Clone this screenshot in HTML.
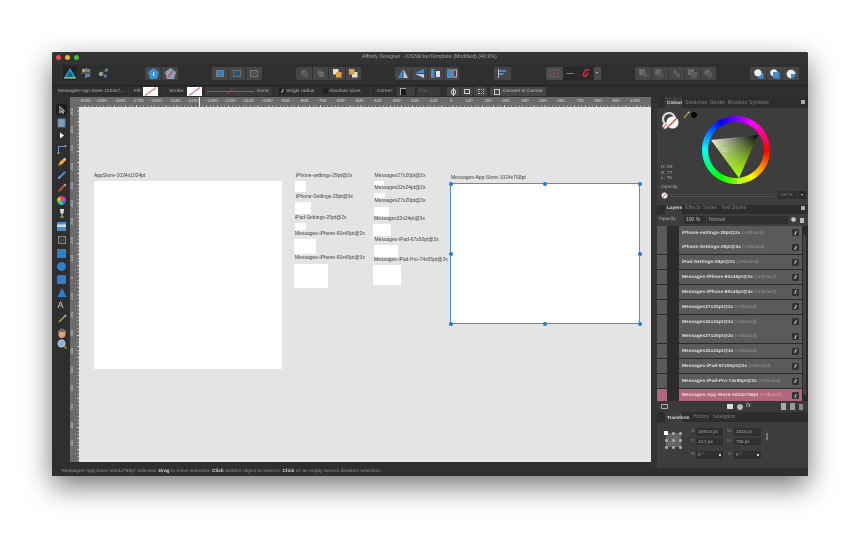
<!DOCTYPE html>
<html>
<head>
<meta charset="utf-8">
<style>
html,body{margin:0;padding:0;background:#fff;width:860px;height:546px;overflow:hidden}
body{font-family:"Liberation Sans",sans-serif;position:relative}
div,span,svg{position:absolute;box-sizing:border-box}
#win{left:52px;top:52px;width:756px;height:424px;background:#2f2f2f;box-shadow:0 10px 28px rgba(0,0,0,.55);border-radius:2px 2px 0 0}
#stage{left:0;top:0;width:860px;height:546px;filter:blur(.35px)}
.t{font-size:4.8px;color:#b4b4b4;white-space:nowrap;line-height:7px;letter-spacing:.05px}
.g{background:#464646;border-radius:1.5px;top:67px;height:12.5px}
.ab{background:#fff}
.l{font-size:5px;color:#3c3c3c;white-space:nowrap;line-height:6px;letter-spacing:0}
.rl{font-size:4.5px;color:#d4d4d4;top:97.5px;line-height:5px;white-space:nowrap;transform:translateX(-50%)}
.vl{font-size:4px;color:#d4d4d4;left:70px;line-height:4px;white-space:nowrap;transform-origin:0 0;transform:rotate(-90deg) translateX(-50%)}
.row{left:657px;width:145px;height:14px;background:#5a5a5a}
.sw{left:667px;width:12px;height:14px;background:#2c2c2c}
.rt{left:682px;font-size:4.7px;font-weight:bold;color:#e4e4e4;letter-spacing:.1px;line-height:14px;white-space:nowrap}
.rt i{font-style:normal;font-weight:normal;color:#999}
.ck{left:792px;width:7px;height:7px;background:#333;border-radius:1px;color:#eee}
.ck:after{content:"";position:absolute;left:3.2px;top:1.5px;width:1px;height:4px;background:#ddd;transform:rotate(25deg)}
.h{width:4px;height:4px;background:#2a7ed3;border-radius:50%}
.tab{font-size:5px;color:#808080;line-height:11px;white-space:nowrap;letter-spacing:.1px}
.fld{background:#303030;border-radius:1px;height:7.5px;font-size:4.5px;color:#aaa;line-height:7.5px;padding-left:2px;white-space:nowrap}
.dot{width:3px;height:3px;background:#aaa;border-radius:50%}
</style>
</head>
<body>
<div id="win"></div>
<div id="stage">
<!-- status -->
<div style="left:52px;top:462px;width:756px;height:14px;background:#2f2f2f"></div>
<div class="t" style="left:61px;top:468px;color:#929292;font-size:4.8px;letter-spacing:.05px">'Messages-App-Store-1024x768pt' selected. <b style="color:#ddd">Drag</b> to move selection. <b style="color:#ddd">Click</b> another object to select it. <b style="color:#ddd">Click</b> on an empty area to deselect selection.</div>
<!-- title bar -->
<div style="left:52px;top:52px;width:756px;height:12px;background:#333;border-radius:2px 2px 0 0"></div>
<div style="left:56px;top:55px;width:5px;height:5px;border-radius:50%;background:#f0504a"></div>
<div style="left:65px;top:55px;width:5px;height:5px;border-radius:50%;background:#f5b52e"></div>
<div style="left:74px;top:55px;width:5px;height:5px;border-radius:50%;background:#3ec840"></div>
<div class="t" style="left:362px;top:54px;color:#a8a8a8;font-size:5.2px">Affinity Designer - iOSStickerTemplate (Modified) (40.9%)</div>
<!-- toolbar -->
<div style="left:63px;top:66px;width:14px;height:14px;background:#222;border-radius:1px"></div>
<svg style="left:64px;top:68px" width="12" height="11"><polygon points="6,0 12,10 0,10" fill="#1b9fd8"/><polygon points="6,3 9.5,9 2.5,9" fill="#0e5f85"/><rect x="0" y="9.5" width="12" height="1" fill="#d6e25a"/></svg>
<svg style="left:81px;top:68px" width="10" height="10"><rect x="4" y="0" width="2" height="10" fill="#777"/><rect x="0" y="4" width="10" height="2" fill="#555"/><rect x="1" y="1" width="3" height="3" fill="#c49a4a"/><rect x="6" y="6" width="3" height="3" fill="#4a8ac4"/><rect x="6" y="1" width="3" height="3" fill="#4aa36a"/></svg>
<svg style="left:98px;top:68px" width="11" height="10"><circle cx="3" cy="6" r="2.2" fill="#a0a0a0"/><circle cx="8.5" cy="2" r="1.6" fill="#4a9a7a"/><circle cx="7.5" cy="8" r="1.6" fill="#4a7ab0"/><path d="M3 6L8.5 2M3 6L7.5 8" stroke="#888" stroke-width=".6"/></svg>

<div class="g" style="left:145px;width:33px"></div>
<div style="left:161px;top:67px;width:1px;height:12.5px;background:#333"></div>
<svg style="left:148px;top:68px" width="11" height="11"><polygon points="5.5,0 11,4 9,11 2,11 0,4" fill="#3f8fd0"/><rect x="5" y="4" width="1.2" height="4" fill="#fff"/></svg>
<svg style="left:165px;top:68px" width="11" height="11"><polygon points="5.5,0 11,4 9,11 2,11 0,4" fill="#8aa3b8"/><path d="M3 9L8 3" stroke="#d33" stroke-width="1"/></svg>

<div class="g" style="left:212px;width:50px"></div>
<div style="left:228px;top:67px;width:1px;height:12.5px;background:#333"></div>
<div style="left:245px;top:67px;width:1px;height:12.5px;background:#333"></div>
<svg style="left:215px;top:69px" width="10" height="9"><rect x="1.5" y="1.5" width="7" height="6" fill="#2f7fc0" stroke="#999" stroke-width=".6"/></svg>
<svg style="left:232px;top:69px" width="10" height="9"><rect x="1.5" y="1.5" width="7" height="6" fill="#24577f" stroke="#888" stroke-width=".6"/></svg>
<svg style="left:249px;top:69px" width="10" height="9"><rect x="1.5" y="1.5" width="7" height="6" fill="none" stroke="#888" stroke-width=".7"/><path d="M1.5 1.5L8.5 7.5M8.5 1.5L1.5 7.5" stroke="#777" stroke-width=".5"/></svg>

<div class="g" style="left:296px;width:65px"></div>
<div style="left:312px;top:67px;width:1px;height:12.5px;background:#333"></div>
<div style="left:328px;top:67px;width:1px;height:12.5px;background:#333"></div>
<div style="left:345px;top:67px;width:1px;height:12.5px;background:#333"></div>
<svg style="left:300px;top:69px" width="9" height="9"><rect x="1" y="1" width="5" height="5" fill="#666"/><rect x="3" y="3" width="5" height="5" fill="#595959"/></svg>
<svg style="left:316px;top:69px" width="9" height="9"><rect x="1" y="1" width="5" height="5" fill="#5e5e5e"/><rect x="3" y="3" width="5" height="5" fill="#6a6a6a"/></svg>
<svg style="left:333px;top:69px" width="9" height="9"><rect x="0" y="0" width="5.5" height="5.5" fill="#ddd"/><rect x="3" y="3" width="5.5" height="5.5" fill="#e2a43a"/></svg>
<svg style="left:349px;top:69px" width="9" height="9"><rect x="3" y="3" width="5.5" height="5.5" fill="#ddd"/><rect x="0" y="0" width="5.5" height="5.5" fill="#e2a43a"/></svg>

<div class="g" style="left:395px;width:64px"></div>
<div style="left:411px;top:67px;width:1px;height:12.5px;background:#333"></div>
<div style="left:427px;top:67px;width:1px;height:12.5px;background:#333"></div>
<div style="left:443px;top:67px;width:1px;height:12.5px;background:#333"></div>
<svg style="left:398px;top:69px" width="10" height="9"><polygon points="4.5,0 4.5,9 0,9" fill="#3f8fd0"/><polygon points="5.5,0 5.5,9 10,9" fill="#bcd"/></svg>
<svg style="left:415px;top:69px" width="10" height="9"><polygon points="9,0 9,4 0,4" fill="#3f8fd0"/><polygon points="9,5 9,9 0,5" fill="#bcd"/></svg>
<svg style="left:431px;top:69px" width="10" height="9"><rect x="0" y="0" width="3.5" height="9" fill="#3f8fd0"/><rect x="5" y="2" width="4" height="6" fill="#dde"/></svg>
<svg style="left:447px;top:69px" width="10" height="9"><rect x="0" y="0" width="5" height="9" fill="#3f8fd0"/><rect x="6" y="1" width="3.5" height="7" fill="none" stroke="#dde" stroke-width=".7"/></svg>

<div class="g" style="left:494px;width:17px"></div>
<svg style="left:498px;top:69px" width="9" height="9"><rect x="0" y="0" width="1" height="9" fill="#bbb"/><rect x="1" y="1" width="7" height="2" fill="#3f8fd0"/><rect x="1" y="4" width="4.5" height="2" fill="#3f8fd0"/></svg>

<div class="g" style="left:546px;width:17px;background:#4c4c4c"></div>
<svg style="left:549px;top:69px" width="10" height="9"><rect x="1" y="1" width="8" height="7" fill="none" stroke="#777" stroke-width="1" stroke-dasharray="1 1"/><rect x="4" y="3.5" width="2" height="2" fill="#d33"/></svg>
<div class="g" style="left:563px;width:30px;background:#282828"></div>
<div style="left:566px;top:73px;width:8px;height:1px;background:#777"></div>
<svg style="left:582px;top:68.5px" width="9" height="10"><path d="M7.5 1.5A3.4 3.4 0 0 0 3 1.8L1.2 5.5A2 2 0 0 0 4 7L6 3.6" fill="none" stroke="#c9283a" stroke-width="1.8"/></svg>
<div class="g" style="left:594px;width:7px;background:#4c4c4c"></div>
<div style="left:596px;top:72px;border:1.5px solid transparent;border-top:2px solid #ccc"></div>

<div class="g" style="left:635px;width:81px"></div>
<div style="left:651px;top:67px;width:1px;height:12.5px;background:#383838"></div>
<div style="left:668px;top:67px;width:1px;height:12.5px;background:#383838"></div>
<div style="left:684px;top:67px;width:1px;height:12.5px;background:#383838"></div>
<div style="left:700px;top:67px;width:1px;height:12.5px;background:#383838"></div>
<svg style="left:639px;top:69px" width="9" height="9"><rect x="0" y="0" width="6" height="6" fill="#6c6c6c"/><circle cx="6" cy="6" r="2.5" fill="#5a5a5a"/></svg>
<svg style="left:655px;top:69px" width="9" height="9"><rect x="0" y="0" width="6" height="6" fill="#666"/><circle cx="6" cy="6" r="2.5" fill="#555"/></svg>
<svg style="left:672px;top:69px" width="9" height="9"><rect x="1" y="1" width="4" height="4" fill="#5c5c5c"/><rect x="4" y="4" width="4" height="4" fill="#5c5c5c"/></svg>
<svg style="left:688px;top:69px" width="9" height="9"><rect x="0" y="0" width="6" height="6" fill="#6a6a6a"/><rect x="3" y="3" width="6" height="6" fill="#5c5c5c"/></svg>
<svg style="left:704px;top:69px" width="9" height="9"><circle cx="3.5" cy="3.5" r="3" fill="#6a6a6a"/><circle cx="5.5" cy="5.5" r="3" fill="#5a5a5a"/></svg>

<div class="g" style="left:750px;width:49px"></div>
<div style="left:766px;top:67px;width:1px;height:12.5px;background:#383838"></div>
<div style="left:782px;top:67px;width:1px;height:12.5px;background:#383838"></div>
<svg style="left:754px;top:68.5px" width="10" height="10"><rect x="4" y="4" width="5.5" height="5.5" fill="#3f8fd0"/><circle cx="3.8" cy="3.8" r="3.6" fill="#eee"/></svg>
<svg style="left:770px;top:68.5px" width="10" height="10"><circle cx="3.8" cy="3.8" r="3.6" fill="#eee"/><rect x="3" y="3" width="6.5" height="6.5" fill="#3f8fd0"/></svg>
<svg style="left:786px;top:68.5px" width="10" height="10"><circle cx="5" cy="5" r="4.4" fill="#eee"/><path d="M5 5H9.4A4.4 4.4 0 0 1 5 9.4Z" fill="#3f8fd0"/></svg>

<!-- context bar -->
<div style="left:52px;top:85px;width:756px;height:.7px;background:#222"></div>
<div class="t" style="left:58px;top:87.5px;letter-spacing:-.02px">Messages-App-Store-1024x7...</div>
<div style="left:128px;top:87px;width:1px;height:9px;background:#3c3c3c"></div>
<div class="t" style="left:134px;top:87.5px">Fill:</div>
<svg style="left:143px;top:86.5px" width="15" height="9"><rect width="15" height="9" fill="#fff"/><path d="M2 8.5L13 .5" stroke="#e5484d" stroke-width=".8"/></svg>
<div style="left:163px;top:87px;width:1px;height:9px;background:#3c3c3c"></div>
<div class="t" style="left:169px;top:87.5px">Stroke:</div>
<svg style="left:187px;top:86.5px" width="15" height="9"><rect width="15" height="9" fill="#fff"/><path d="M2 8.5L13 .5" stroke="#e5484d" stroke-width=".8"/></svg>
<div style="left:205px;top:87px;width:67px;height:9px;background:#3a3a3a;border-radius:1px"></div>
<div style="left:207px;top:90.5px;width:47px;height:1px;background:#6a6a6a"></div>
<svg style="left:226px;top:88px" width="8" height="7"><path d="M1 6L7 1" stroke="#d33" stroke-width=".8"/></svg>
<div class="t" style="left:257px;top:87.5px">None</div>
<div style="left:276px;top:87px;width:1px;height:9px;background:#3c3c3c"></div>
<div style="left:279px;top:88px;width:6px;height:6px;background:#222;border-radius:1px"></div>
<div style="left:281.5px;top:89px;width:1px;height:4px;background:#ddd;transform:rotate(25deg)"></div>
<div class="t" style="left:286px;top:87.5px">Single radius</div>
<div style="left:322px;top:88px;width:6px;height:6px;background:#222;border-radius:1px"></div>
<div class="t" style="left:329px;top:87.5px">Absolute sizes</div>
<div style="left:370px;top:87px;width:1px;height:9px;background:#3c3c3c"></div>
<div class="t" style="left:377px;top:87.5px">Corner:</div>
<div style="left:397px;top:87px;width:18px;height:9px;background:#3e3e3e;border-radius:1px"></div>
<div style="left:400px;top:88px;width:6px;height:6.5px;background:#1a1a1a;border:.5px solid #aaa;border-right:none;border-bottom:none"></div>
<div style="left:417px;top:87px;width:23px;height:9px;background:#3a3a3a;border-radius:1px"></div>
<div class="t" style="left:419px;top:87.5px;color:#6e6e6e">0 %</div>
<div class="g" style="left:447px;top:87px;width:13px;height:9px"></div>
<div class="g" style="left:461px;top:87px;width:12px;height:9px"></div>
<div class="g" style="left:474px;top:87px;width:13px;height:9px"></div>
<div style="left:451px;top:88.5px;width:5px;height:6px;border-radius:50%;border:.8px solid #ddd"></div>
<div style="left:453px;top:87.5px;width:1px;height:8px;background:#ddd"></div>
<div style="left:464px;top:89px;width:6px;height:4.5px;border:.8px solid #ccc"></div>
<div style="left:478px;top:89px;width:6px;height:4.5px;border:.8px dotted #ccc"></div>
<div class="g" style="left:490px;top:87px;width:56px;height:9px"></div>
<div style="left:494px;top:88.5px;width:6px;height:6px;border:.8px solid #ccc"></div>
<div class="t" style="left:503px;top:87.5px;color:#c4c4c4">Convert to Curves</div>

<!-- rulers -->
<div style="left:70px;top:97px;width:581px;height:10px;background:#6b6b6b"></div>
<div style="left:70px;top:104.5px;width:581px;height:2.5px;background:repeating-linear-gradient(90deg,#d0d0d0 0,#d0d0d0 .6px,transparent .6px,transparent 3.68px)"></div>
<div style="left:70px;top:97px;width:9px;height:365px;background:#6b6b6b"></div>
<div style="left:76.5px;top:107px;width:2.5px;height:355px;background:repeating-linear-gradient(180deg,#d0d0d0 0,#d0d0d0 .6px,transparent .6px,transparent 3.68px)"></div>
<div style="left:199px;top:97px;width:.8px;height:10px;background:#eee"></div>
<div class="rl" style="left:85px">-2000</div><div class="rl" style="left:101px">-1900</div><div class="rl" style="left:120px">-1800</div>
<div class="rl" style="left:138px">-1700</div><div class="rl" style="left:156px">-1600</div><div class="rl" style="left:175px">-1500</div>
<div class="rl" style="left:193px">-1400</div><div class="rl" style="left:212px">-1300</div><div class="rl" style="left:230px">-1200</div>
<div class="rl" style="left:248px">-1100</div><div class="rl" style="left:267px">-1000</div><div class="rl" style="left:285px">-900</div>
<div class="rl" style="left:304px">-800</div><div class="rl" style="left:322px">-700</div><div class="rl" style="left:340px">-600</div>
<div class="rl" style="left:359px">-500</div><div class="rl" style="left:377px">-400</div><div class="rl" style="left:396px">-300</div>
<div class="rl" style="left:414px">-200</div><div class="rl" style="left:433px">-100</div><div class="rl" style="left:451px">0</div>
<div class="rl" style="left:469px">100</div><div class="rl" style="left:488px">200</div><div class="rl" style="left:506px">300</div>
<div class="rl" style="left:525px">400</div><div class="rl" style="left:543px">500</div><div class="rl" style="left:561px">600</div>
<div class="rl" style="left:580px">700</div><div class="rl" style="left:598px">800</div><div class="rl" style="left:616px">900</div>
<div class="rl" style="left:635px">1000</div>
<div class="vl" style="top:112px">-900</div><div class="vl" style="top:130px">-800</div><div class="vl" style="top:149px">-700</div>
<div class="vl" style="top:167px">-600</div><div class="vl" style="top:186px">-500</div><div class="vl" style="top:204px">-400</div>
<div class="vl" style="top:222px">-300</div><div class="vl" style="top:241px">-200</div><div class="vl" style="top:259px">-100</div>
<div class="vl" style="top:278px">0</div><div class="vl" style="top:296px">100</div><div class="vl" style="top:315px">200</div>
<div class="vl" style="top:333px">300</div><div class="vl" style="top:351px">400</div><div class="vl" style="top:370px">500</div>
<div class="vl" style="top:388px">600</div><div class="vl" style="top:407px">700</div><div class="vl" style="top:425px">800</div>
<div class="vl" style="top:443px">900</div>

<!-- canvas -->
<div style="left:79px;top:107px;width:572px;height:355px;background:#e4e4e4"></div>
<div class="ab" style="left:94px;top:181px;width:188px;height:188px"></div>
<div class="l" style="left:94px;top:173px">AppStore-1024x1024pt</div>
<div class="ab" style="left:295px;top:181px;width:11px;height:10.5px"></div>
<div class="l" style="left:296px;top:172.5px">iPhone-settings-29pt@2x</div>
<div class="ab" style="left:295px;top:202px;width:16px;height:12px"></div>
<div class="l" style="left:296px;top:194px">iPhone-Settings-29pt@3x</div>
<div class="ab" style="left:295px;top:223px;width:11px;height:7px"></div>
<div class="l" style="left:295px;top:215px">iPad-Settings-29pt@2x</div>
<div class="ab" style="left:294px;top:239px;width:22px;height:15px"></div>
<div class="l" style="left:295px;top:231px">Messages-iPhone-60x45pt@2x</div>
<div class="ab" style="left:294px;top:264px;width:34px;height:24px"></div>
<div class="l" style="left:295px;top:255px">Messages-iPhone-60x45pt@3x</div>
<div class="ab" style="left:374px;top:181px;width:10px;height:4.5px"></div>
<div class="l" style="left:374.5px;top:173px">Messages27x20pt@2x</div>
<div class="ab" style="left:374px;top:193px;width:11px;height:5px"></div>
<div class="l" style="left:374.5px;top:185px">Messages32x24pt@2x</div>
<div class="ab" style="left:374px;top:207px;width:15px;height:9px"></div>
<div class="l" style="left:374.5px;top:198px">Messages27x20pt@3x</div>
<div class="ab" style="left:373px;top:224px;width:18px;height:12px"></div>
<div class="l" style="left:374px;top:216px">Messages32x24pt@3x</div>
<div class="ab" style="left:374px;top:245px;width:24px;height:12px"></div>
<div class="l" style="left:374.5px;top:236.5px">Messages-iPad-67x50pt@2x</div>
<div class="ab" style="left:373px;top:265px;width:28px;height:20px"></div>
<div class="l" style="left:374px;top:256.5px">Messages-iPad-Pro-74x55pt@2x</div>
<div class="l" style="left:451px;top:175px">Messages-App-Store-1024x768pt</div>
<div class="ab" style="left:450px;top:183px;width:190px;height:141px;border:1px solid #4a90d9"></div>
<div class="h" style="left:448.5px;top:181.5px"></div><div class="h" style="left:543px;top:181.5px"></div><div class="h" style="left:638px;top:181.5px"></div>
<div class="h" style="left:448.5px;top:251.5px"></div><div class="h" style="left:638px;top:251.5px"></div>
<div class="h" style="left:448.5px;top:322px"></div><div class="h" style="left:543px;top:322px"></div><div class="h" style="left:638px;top:322px"></div>

<!-- tools -->
<div style="left:52px;top:97px;width:18px;height:365px;background:#2f2f2f"></div>
<div style="left:56px;top:104px;width:11px;height:11px;background:#1d1d1d;border-radius:1px"></div>
<svg style="left:59px;top:105.5px" width="6" height="8"><path d="M.8.5V7L2.4 5.4 3.6 7.6 4.6 7 3.5 4.9H5.4Z" fill="#555" stroke="#ddd" stroke-width=".6"/></svg>
<svg style="left:57px;top:118px" width="9" height="10"><rect x="1" y="1" width="7" height="8" fill="#8a9aa8" stroke="#3f8fd0" stroke-width=".8"/></svg>
<svg style="left:59px;top:132px" width="6" height="7"><path d="M1 .5V6.5L5 3.5Z" fill="#fff"/></svg>
<svg style="left:57px;top:144px" width="10" height="10"><path d="M1.5 9V2.5H8" fill="none" stroke="#6a94c0" stroke-width="1"/><circle cx="1.5" cy="9" r="1" fill="#aaa"/><circle cx="8.5" cy="2" r="1" fill="#aaa"/></svg>
<svg style="left:57px;top:157px" width="10" height="10"><path d="M1 9L3 4.5 7 1 9 3 5.5 7Z" fill="#e3a63e"/><path d="M7 1L9 3" stroke="#ddd"/></svg>
<svg style="left:57px;top:170px" width="10" height="10"><path d="M1 9L2 6.5 7.5 1 9 2.5 3.5 8Z" fill="#3f8fd0"/><path d="M1 9L2 6.5 3.5 8Z" fill="#e8c9a0"/></svg>
<svg style="left:57px;top:183px" width="10" height="10"><path d="M1 9L2 6.5 7.5 1 9 2.5 3.5 8Z" fill="#b55a3a"/><path d="M7.5 1L9 2.5" stroke="#ddd"/></svg>
<div style="left:57px;top:196px;width:9px;height:9px;border-radius:50%;background:conic-gradient(#e33,#e3c,#36d,#3cc,#3c3,#ec3,#e33)"></div>
<svg style="left:58px;top:208px" width="8" height="11"><path d="M2 1H6L5.5 5.5H2.5Z" fill="#ddd"/><rect x="3.5" y="5.5" width="1" height="3" fill="#bbb"/><rect x="2" y="8.5" width="4" height="1.2" fill="#999"/></svg>
<div style="left:57px;top:222px;width:9px;height:9px;background:linear-gradient(#3f8fd0 0,#3f8fd0 30%,#ddd 30%,#ddd 55%,#3f8fd0 55%)"></div>
<svg style="left:57px;top:235px" width="10" height="10"><rect x="1.5" y="1.5" width="7" height="7" fill="none" stroke="#999" stroke-width=".8"/><path d="M1.5 1.5L8.5 8.5M8.5 1.5L1.5 8.5" stroke="#888" stroke-width=".5"/></svg>
<div style="left:57px;top:249px;width:9px;height:9px;background:#2f80cc"></div>
<div style="left:57px;top:262px;width:9px;height:9px;background:#2f80cc;border-radius:50%"></div>
<div style="left:57px;top:275px;width:9px;height:9px;background:#2f80cc;border-radius:2px"></div>
<svg style="left:57px;top:288px" width="10" height="9"><polygon points="5,0 9.5,9 .5,9" fill="#2f80cc"/></svg>
<div class="t" style="left:57.5px;top:301px;font-size:9px;line-height:9px;color:#cfcfcf;letter-spacing:0">A</div>
<svg style="left:58px;top:314px" width="9" height="9"><path d="M1 8L6.5 2.5" stroke="#c9a54a" stroke-width="1.3"/><path d="M6.5 2.5L8 1" stroke="#ddd" stroke-width="1.3"/></svg>
<svg style="left:57px;top:327px" width="10" height="11"><path d="M2 6V3M4 5.5V1.5M6 5.5V2M8 6V3M2 5.5V8.5Q3 10.5 5 10.5T8 8V5.5Z" fill="#d9a27c" stroke="#d9a27c" stroke-width="1"/></svg>
<svg style="left:57px;top:339px" width="10" height="10"><circle cx="4.5" cy="4.5" r="3.6" fill="#7fb6e6" stroke="#ddd" stroke-width=".7"/><path d="M7 7L9.5 9.5" stroke="#c9a54a" stroke-width="1.2"/></svg>

<!-- right dock -->
<div style="left:651px;top:97px;width:157px;height:379px;background:#333"></div>
<div style="left:657px;top:97px;width:151px;height:11px;background:#2d2d2d"></div>
<div style="left:665px;top:97px;width:17px;height:11px;background:#3d3d3d"></div>
<div class="tab" style="left:667px;top:97.5px;color:#ddd;font-weight:bold;letter-spacing:0;font-size:4.8px">Colour</div>
<div class="tab" style="left:685px;top:97.5px">Swatches</div>
<div class="tab" style="left:710px;top:97.5px">Stroke</div>
<div class="tab" style="left:728px;top:97.5px">Brushes</div>
<div class="tab" style="left:749px;top:97.5px">Symbols</div>
<div style="left:801px;top:100px;width:4px;height:4px;background:#aaa"></div>
<!-- colour panel -->
<div style="left:657px;top:108px;width:151px;height:97px;background:#3d3d3d"></div>
<div style="left:662px;top:112px;width:14px;height:14px;border-radius:50%;border:2px solid #ddd;background:#444"></div>
<svg style="left:666px;top:116px" width="13" height="13"><circle cx="6.5" cy="6.5" r="6" fill="#fff"/><path d="M2.5 10.5L10.5 2.5" stroke="#e5484d" stroke-width="1.4"/></svg>
<svg style="left:661.5px;top:123px" width="6" height="6"><circle cx="3" cy="3" r="2.7" fill="#fff"/><path d="M1 5L5 1" stroke="#e5484d"/></svg>
<svg style="left:683px;top:111px" width="7" height="8"><path d="M1 7L5 2" stroke="#c9954a" stroke-width="1.3"/><path d="M5 2L6.5.8" stroke="#ccc" stroke-width="1.3"/></svg>
<div style="left:691px;top:112px;width:6px;height:6px;border-radius:50%;background:#000"></div>
<div style="left:702px;top:116px;width:68px;height:68px;border-radius:50%;background:conic-gradient(from 31deg,#f0f 0deg,#f00 60deg,#ff0 120deg,#0f0 180deg,#0ff 240deg,#00f 300deg,#f0f 360deg)"></div>
<div style="left:708px;top:122px;width:56px;height:56px;border-radius:50%;background:#3d3d3d"></div>
<svg style="left:702px;top:116px" width="68" height="68">
<defs>
<linearGradient id="a" gradientUnits="userSpaceOnUse" x1="9" y1="24" x2="56" y2="19"><stop offset="0" stop-color="#f2f2ea"/><stop offset="1" stop-color="#000"/></linearGradient>
<linearGradient id="b" gradientUnits="userSpaceOnUse" x1="37" y1="62" x2="33" y2="21"><stop offset="0" stop-color="#a8ff00"/><stop offset="1" stop-color="#a8ff00" stop-opacity="0"/></linearGradient>
</defs>
<polygon points="9,24 56,19 37,62" fill="url(#a)"/>
<polygon points="9,24 56,19 37,62" fill="url(#b)"/>
<circle cx="22.5" cy="34" r="2" fill="none" stroke="#ddd" stroke-width=".7"/>
<circle cx="37.5" cy="66" r="2" fill="none" stroke="#eee" stroke-width=".8"/>
</svg>
<div class="t" style="left:661px;top:164px">H: 84</div>
<div class="t" style="left:661px;top:169.5px">S: 77</div>
<div class="t" style="left:661px;top:175px">L: 75</div>
<div class="t" style="left:661px;top:183.5px">Opacity</div>
<svg style="left:661px;top:192px" width="7" height="7"><circle cx="3.5" cy="3.5" r="3" fill="#fff"/><path d="M1.3 5.7L5.7 1.3" stroke="#e5484d"/></svg>
<div style="left:670px;top:193.5px;width:105px;height:3.5px;background:#333;border-radius:2px;border:.5px solid #4c4c4c"></div>
<div class="fld" style="left:778px;top:191px;width:20px;height:8px;color:#777">100 %</div>
<div style="left:799px;top:191px;width:7px;height:8px;background:#2a2a2a"></div>
<div style="left:801px;top:194px;border:1.5px solid transparent;border-top:2px solid #ccc"></div>
<!-- layers panel -->
<div style="left:657px;top:205px;width:151px;height:9.5px;background:#2d2d2d"></div>
<div style="left:665px;top:205px;width:17px;height:9.5px;background:#3d3d3d"></div>
<div class="tab" style="left:667px;top:202.5px;color:#ddd;font-weight:bold;letter-spacing:0;font-size:4.8px">Layers</div>
<div class="tab" style="left:685px;top:202.5px">Effects</div>
<div class="tab" style="left:703px;top:202.5px">Styles</div>
<div class="tab" style="left:721px;top:202.5px">Text Styles</div>
<div style="left:801px;top:206px;width:4px;height:4px;background:#aaa"></div>
<div style="left:657px;top:214px;width:151px;height:12px;background:#3d3d3d"></div>
<div class="t" style="left:659px;top:215.5px">Opacity:</div>
<div class="fld" style="left:684px;top:215.5px;width:22px;height:8px;line-height:8px;color:#ccc;font-size:5px">100 %</div>
<div class="fld" style="left:707px;top:215.5px;width:81px;height:8px;line-height:8px;font-size:5px">Normal</div>
<div style="left:791px;top:217px;width:5px;height:5px;border-radius:50%;background:#ccc;border:1.3px solid #aaa"></div>
<div style="left:800px;top:218px;width:4px;height:4.5px;background:#bbb;border-radius:.5px"></div>
<div style="left:657px;top:226px;width:151px;height:175px;background:#2a2a2a"></div>
<div class="row" style="top:225.5px"></div><div class="sw" style="top:225.5px"></div><div class="rt" style="top:225.5px">iPhone-settings-29pt@2x <i>(Artboard)</i></div><div class="ck" style="top:229px"></div>
<div class="row" style="top:240.3px"></div><div class="sw" style="top:240.3px"></div><div class="rt" style="top:240.3px">iPhone-Settings-29pt@3x <i>(Artboard)</i></div><div class="ck" style="top:244px"></div>
<div class="row" style="top:255.2px"></div><div class="sw" style="top:255.2px"></div><div class="rt" style="top:255.2px">iPad-Settings-29pt@2x <i>(Artboard)</i></div><div class="ck" style="top:258.8px"></div>
<div class="row" style="top:270px"></div><div class="sw" style="top:270px"></div><div class="rt" style="top:270px">Messages-iPhone-60x45pt@2x <i>(Artboard)</i></div><div class="ck" style="top:273.5px"></div>
<div class="row" style="top:284.9px"></div><div class="sw" style="top:284.9px"></div><div class="rt" style="top:284.9px">Messages-iPhone-60x45pt@3x <i>(Artboard)</i></div><div class="ck" style="top:288.5px"></div>
<div class="row" style="top:299.7px"></div><div class="sw" style="top:299.7px"></div><div class="rt" style="top:299.7px">Messages27x20pt@2x <i>(Artboard)</i></div><div class="ck" style="top:303.3px"></div>
<div class="row" style="top:314.6px"></div><div class="sw" style="top:314.6px"></div><div class="rt" style="top:314.6px">Messages32x24pt@2x <i>(Artboard)</i></div><div class="ck" style="top:318px"></div>
<div class="row" style="top:329.4px"></div><div class="sw" style="top:329.4px"></div><div class="rt" style="top:329.4px">Messages27x20pt@3x <i>(Artboard)</i></div><div class="ck" style="top:333px"></div>
<div class="row" style="top:344.3px"></div><div class="sw" style="top:344.3px"></div><div class="rt" style="top:344.3px">Messages32x24pt@3x <i>(Artboard)</i></div><div class="ck" style="top:347.8px"></div>
<div class="row" style="top:359.1px"></div><div class="sw" style="top:359.1px"></div><div class="rt" style="top:359.1px">Messages-iPad-67x50pt@2x <i>(Artboard)</i></div><div class="ck" style="top:362.6px"></div>
<div class="row" style="top:374px"></div><div class="sw" style="top:374px"></div><div class="rt" style="top:374px">Messages-iPad-Pro-74x55pt@2x <i>(Artboard)</i></div><div class="ck" style="top:377.5px"></div>
<div class="row" style="top:388.5px;height:13px;background:#b0677c"></div><div class="sw" style="top:388.5px;height:13px"></div><div class="rt" style="top:388px">Messages-App-Store-1024x768pt <i style="color:#d8a8b6">(Artboard)</i></div><div class="ck" style="top:392px"></div>
<div style="left:803px;top:235px;width:3px;height:160px;background:#444;border-radius:2px"></div>
<div style="left:657px;top:401px;width:151px;height:11px;background:#3a3a3a"></div>
<div style="left:661px;top:403.5px;width:7px;height:5.5px;border:.8px solid #aaa;border-radius:1px"></div>
<div style="left:727px;top:404px;width:6px;height:5px;background:#ddd;border-radius:.5px"></div>
<div style="left:737px;top:403.5px;width:6px;height:6px;background:#bbb;border-radius:50%"></div>
<div class="t" style="left:746px;top:403px;font-size:6px;color:#ccc;font-style:italic">fx</div>
<div style="left:781px;top:403px;width:5px;height:6.5px;background:#aaa"></div>
<div style="left:790px;top:403px;width:5px;height:6.5px;background:#999"></div>
<div style="left:799px;top:403.5px;width:4px;height:6px;background:#888"></div>
<!-- transform panel -->
<div style="left:657px;top:412px;width:151px;height:10px;background:#2d2d2d"></div>
<div style="left:665px;top:412px;width:17px;height:10px;background:#3d3d3d"></div>
<div class="tab" style="left:667px;top:412px;color:#ddd;font-weight:bold;letter-spacing:0;font-size:4.6px">Transform</div>
<div class="tab" style="left:693px;top:412px">History</div>
<div class="tab" style="left:713px;top:412px">Navigator</div>
<div style="left:657px;top:422px;width:151px;height:46px;background:#3d3d3d"></div>
<div style="left:666px;top:433px;width:15px;height:14px;background:#666"></div>
<div style="left:664px;top:431px;width:4px;height:4px;background:#fff"></div>
<div class="dot" style="left:671.5px;top:431.5px"></div><div class="dot" style="left:679px;top:431.5px"></div>
<div class="dot" style="left:664.5px;top:438.5px"></div><div class="dot" style="left:671.5px;top:438.5px"></div><div class="dot" style="left:679px;top:438.5px"></div>
<div class="dot" style="left:664.5px;top:446px"></div><div class="dot" style="left:671.5px;top:446px"></div><div class="dot" style="left:679px;top:446px"></div>
<div class="t" style="left:691px;top:428px;color:#888">X:</div><div class="fld" style="left:696px;top:428px;width:27px">1940.8 px</div>
<div class="t" style="left:727px;top:428px;color:#888">W:</div><div class="fld" style="left:734px;top:428px;width:27px">1024 px</div>
<div class="t" style="left:691px;top:437.5px;color:#888">Y:</div><div class="fld" style="left:696px;top:437.5px;width:27px">13.1 px</div>
<div class="t" style="left:727px;top:437.5px;color:#888">H:</div><div class="fld" style="left:734px;top:437.5px;width:27px">768 px</div>
<div style="left:766px;top:433px;width:2px;height:7px;background:#777"></div>
<div class="t" style="left:691px;top:451px;color:#888">R:</div><div class="fld" style="left:696px;top:451px;width:27px">0 °</div>
<div class="t" style="left:728px;top:451px;color:#888">S:</div><div class="fld" style="left:734px;top:451px;width:27px">0 °</div>
<div style="left:719px;top:454px;width:1.5px;height:1.5px;background:#ccc"></div>
<div style="left:757px;top:454px;width:1.5px;height:1.5px;background:#ccc"></div>
<div style="left:651px;top:468px;width:157px;height:8px;background:#2f2f2f"></div>
</div>
</body>
</html>
